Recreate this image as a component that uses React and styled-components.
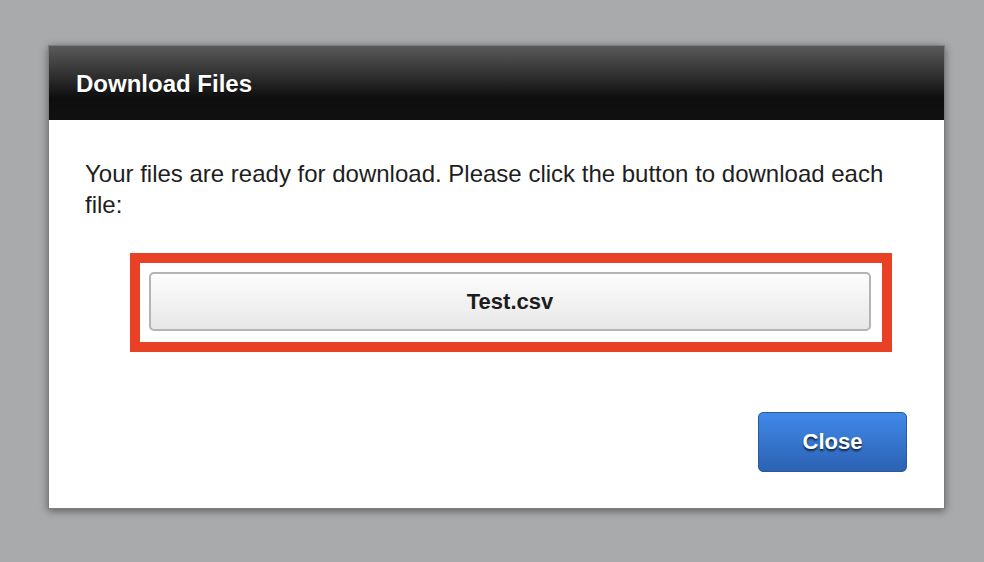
import { styled, createGlobalStyle } from "styled-components"

const Global = createGlobalStyle`
  html, body {
    margin: 0;
    padding: 0;
    background: #a9aaac;
    font-family: "Liberation Sans", Arial, Helvetica, sans-serif;
  }
`

const Page = styled.div`
  width: 984px;
  height: 562px;
  box-sizing: border-box;
  padding: 45px 39px 0 48px;
`

const Dialog = styled.div`
  width: 897px;
  background: #fff;
  border: 1px solid #7d7d7d;
  box-sizing: border-box;
  box-shadow: 0 2px 8px rgba(0, 0, 0, 0.45);
  display: flex;
  flex-direction: column;
`

const Header = styled.div`
  height: 74px;
  background: linear-gradient(#5a5a5a 0%, #2a2a2a 45%, #0e0e0e 70%, #111 100%);
  display: flex;
  align-items: center;
  padding: 2px 0 0 27px;
  box-sizing: border-box;
  h2 {
    margin: 0;
    color: #fff;
    font-size: 24px;
    font-weight: 700;
    text-shadow: 0 1px 1px rgba(0, 0, 0, 0.6);
  }
`

const Body = styled.div`
  padding: 38px 36px 36px 36px;
  display: flex;
  flex-direction: column;
`

const Message = styled.p`
  margin: 0;
  font-size: 24px;
  line-height: 31px;
  color: #1e1e1e;
`

const Highlight = styled.div`
  margin: 33px 0 0 45px;
  width: 762px;
  box-sizing: border-box;
  border: 10px solid #e94126;
  padding: 9px 11px 11px 9px;
`

const FileButton = styled.button`
  width: 100%;
  height: 59px;
  border: 2px solid #b4b4b4;
  border-radius: 5px;
  background: linear-gradient(#fdfdfd, #e7e7e7);
  font-family: inherit;
  font-size: 22px;
  font-weight: 700;
  color: #1d1d1d;
  cursor: pointer;
`

const Footer = styled.div`
  display: flex;
  justify-content: flex-end;
  margin-top: 60px;
  margin-right: 1px;
`

const CloseButton = styled.button`
  width: 149px;
  height: 60px;
  border: 1px solid #2c5a93;
  border-radius: 5px;
  background: linear-gradient(#4189ea, #2b62b3);
  color: #fff;
  font-family: inherit;
  font-size: 22px;
  font-weight: 700;
  text-shadow: 0 2px 2px rgba(0, 0, 0, 0.7);
  cursor: pointer;
`

export default function App() {
  const files = ["Test.csv"]
  return (
    <>
      <Global />
      <Page>
        <Dialog>
          <Header>
            <h2>Download Files</h2>
          </Header>
          <Body>
            <Message>
              Your files are ready for download. Please click the button to download each file:
            </Message>
            <Highlight>
              {files.map((f) => (
                <FileButton key={f}>{f}</FileButton>
              ))}
            </Highlight>
            <Footer>
              <CloseButton>Close</CloseButton>
            </Footer>
          </Body>
        </Dialog>
      </Page>
    </>
  )
}
